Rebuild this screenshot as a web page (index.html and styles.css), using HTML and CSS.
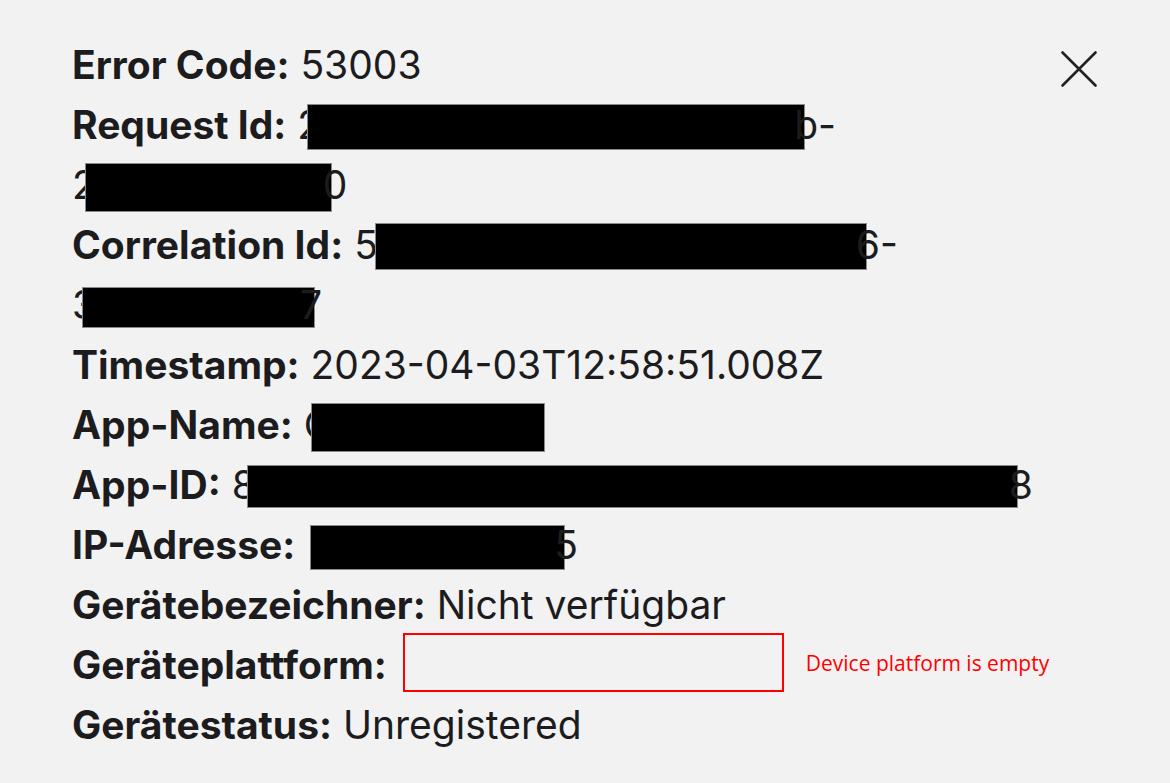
FILE: index.html
```html
<!DOCTYPE html>
<html lang="de">
<head>
<meta charset="utf-8">
<title>Fehlerdetails</title>
<link rel="stylesheet" href="styles.css">
</head>
<body>
<div class="panel">
  <button class="close" aria-label="Schließen">
    <svg width="36" height="36" viewBox="0 0 36 36"><path d="M1.5 1.5 L34.5 34.5 M34.5 1.5 L1.5 34.5" stroke="#222" stroke-width="2.6" stroke-linecap="round" fill="none"/></svg>
  </button>
  <div class="details">
    <div class="row"><b>Error Code:</b> 53003</div>
    <div class="row"><b>Request Id:</b> 2<span class="redact r1"></span>b-</div>
    <div class="row">2<span class="redact r2"></span>0</div>
    <div class="row"><b>Correlation Id:</b> 5<span class="redact r3"></span>6-</div>
    <div class="row">3<span class="redact r4"></span>7</div>
    <div class="row"><b>Timestamp:</b> 2023-04-03T12:58:51.008Z</div>
    <div class="row"><b>App-Name:</b> C<span class="redact r5"></span></div>
    <div class="row"><b>App-ID:</b> 8<span class="redact r6"></span>8</div>
    <div class="row"><b>IP-Adresse:</b> <span class="redact r7"></span>5</div>
    <div class="row"><b>Gerätebezeichner:</b> Nicht verfügbar</div>
    <div class="row platform"><b>Geräteplattform:</b><span class="empty-box"></span><span class="note">Device platform is empty</span></div>
    <div class="row"><b>Gerätestatus:</b> Unregistered</div>
  </div>
</div>
</body>
</html>
```
FILE: styles.css
```css
html, body {
  margin: 0;
  padding: 0;
  background: #f2f2f2;
}
.panel {
  position: relative;
  width: 1170px;
  height: 783px;
  box-sizing: border-box;
  padding: 35px 0 0 72px;
  font-family: Inter, "Noto Sans", sans-serif;
  color: #1c1c1e;
}
.close {
  position: absolute;
  left: 1061px;
  top: 51px;
  width: 36px;
  height: 36px;
  padding: 0;
  border: 0;
  background: none;
}
.close svg { display: block; }
.details {
  font-size: 39px;
  line-height: 60px;
}
.row {
  white-space: nowrap;
  height: 60px;
}
.row b { font-weight: 700; }
.redact {
  display: inline-block;
  background: #000;
  box-shadow: 0 0 0 1px #8a8a8a;
  vertical-align: -10px;
}
.r1 { width: 496px; height: 44px; margin-left: -13px; margin-right: -10px; }
.r2 { width: 245px; height: 47px; margin-left: -10px; margin-right: -8px; vertical-align: -12px; }
.r3 { width: 490px; height: 45px; margin-left: -2px; margin-right: -10px; }
.r4 { width: 231px; height: 39px; margin-left: -13px; margin-right: -14px; vertical-align: -8px; }
.r5 { width: 232px; height: 47px; margin-left: -20px; vertical-align: -12px; }
.r6 { width: 769px; height: 41px; margin-left: -8px; margin-right: -8px; vertical-align: -8px; }
.r7 { width: 253px; height: 43px; margin-left: 5px; margin-right: -10px; vertical-align: -10px; }
.platform {
  display: flex;
  align-items: center;
}
.empty-box {
  width: 377px;
  height: 55px;
  border: 2px solid #f00;
  margin-left: 16px;
  margin-bottom: 5px;
  flex: none;
}
.note {
  margin-left: 22px;
  margin-bottom: 5px;
  font-family: "Open Sans", "Noto Sans", sans-serif;
  font-size: 21px;
  line-height: 24px;
  color: #f00;
}
```
